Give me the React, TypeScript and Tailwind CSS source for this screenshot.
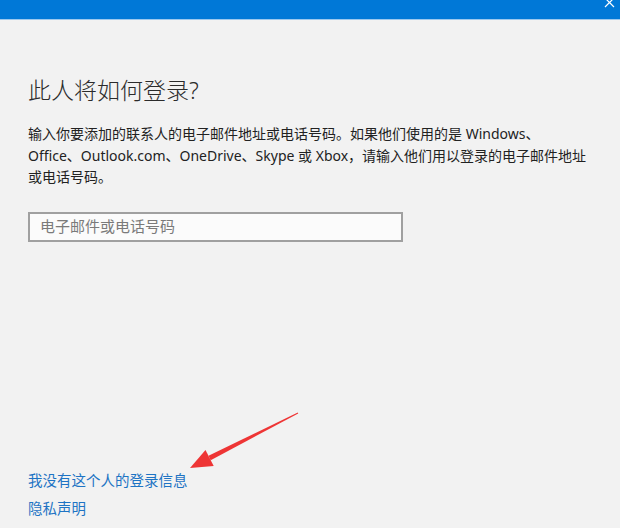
const App = () => {
  return (
    <div
      className="relative flex h-[528px] w-[620px] flex-col overflow-hidden bg-[#f2f2f2]"
      style={{ fontFamily: "'Noto Sans', 'Noto Sans CJK SC', sans-serif" }}
    >
      <div className="relative h-[20px] shrink-0 border-b border-[#9cc8ee] bg-[#0078d7]">
        <svg className="absolute right-[5px] top-[-3px] h-[11px] w-[11px]" viewBox="0 0 11 11">
          <path d="M1 1 L10 10 M10 1 L1 10" stroke="#ffffff" strokeWidth="1.2" fill="none" />
        </svg>
      </div>

      <div className="flex flex-1 flex-col px-[28px] pt-[55px]">
        <h1 className="text-[23px] font-light leading-[30px] text-[#2b2b2b]">此人将如何登录?</h1>

        <p className="mt-[18px] text-[14px] leading-[21.5px] text-[#222]">
          输入你要添加的联系人的电子邮件地址或电话号码。如果他们使用的是 Windows、
          <br />
          Office、Outlook.com、OneDrive、Skype 或 Xbox，请输入他们用以登录的电子邮件地址
          <br />
          或电话号码。
        </p>

        <div className="mt-[24px] flex h-[30px] w-[375px] items-center border-2 border-[#a0a0a0] bg-[#fbfbfb] px-[10px]">
          <span className="text-[15px] text-[#7a7a7a]">电子邮件或电话号码</span>
        </div>

        <div className="mt-auto flex flex-col pb-[6px] text-[14.5px] leading-[28px] text-[#1e74c4]">
          <span>我没有这个人的登录信息</span>
          <span>隐私声明</span>
        </div>
      </div>

      <svg className="pointer-events-none absolute left-0 top-0 h-[528px] w-[620px]" viewBox="0 0 620 528">
        <polygon points="298.2,413.4 297.8,412.6 208.5,455.8 210.7,460.2" fill="#ee3535" />
        <polygon points="190,468 205.5,450 213.7,466" fill="#ee3535" />
      </svg>
    </div>
  );
};

export default App;
